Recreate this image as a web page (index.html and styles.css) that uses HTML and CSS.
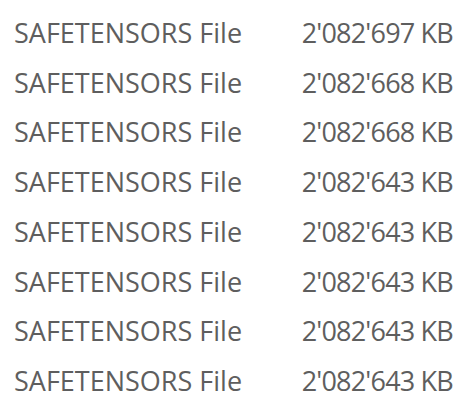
FILE: index.html
```html
<!DOCTYPE html>
<html lang="en">
<head>
    <meta charset="UTF-8">
    <meta name="viewport" content="width=device-width, initial-scale=1.0">
    <title>Files</title>
    <link rel="stylesheet" href="styles.css">
</head>
<body>
    <div class="file-list">
        <div class="file-row"><span class="file-type">SAFETENSORS File</span><span class="file-size">2'082'697 KB</span></div>
        <div class="file-row"><span class="file-type">SAFETENSORS File</span><span class="file-size">2'082'668 KB</span></div>
        <div class="file-row"><span class="file-type">SAFETENSORS File</span><span class="file-size">2'082'668 KB</span></div>
        <div class="file-row"><span class="file-type">SAFETENSORS File</span><span class="file-size">2'082'643 KB</span></div>
        <div class="file-row"><span class="file-type">SAFETENSORS File</span><span class="file-size">2'082'643 KB</span></div>
        <div class="file-row"><span class="file-type">SAFETENSORS File</span><span class="file-size">2'082'643 KB</span></div>
        <div class="file-row"><span class="file-type">SAFETENSORS File</span><span class="file-size">2'082'643 KB</span></div>
        <div class="file-row"><span class="file-type">SAFETENSORS File</span><span class="file-size">2'082'643 KB</span></div>
    </div>
</body>
</html>
```

FILE: styles.css
```css
body {
    margin: 0;
    background-color: #ffffff;
    font-family: "Open Sans", "Noto Sans", sans-serif;
    color: #5e5e5e;
}
.file-list {
    padding: 8px 21px 0 14px;
}
.file-row {
    display: flex;
    justify-content: space-between;
    font-size: 27px;
    line-height: 49.7px;
}
.file-size {
    letter-spacing: -0.8px;
}
```
